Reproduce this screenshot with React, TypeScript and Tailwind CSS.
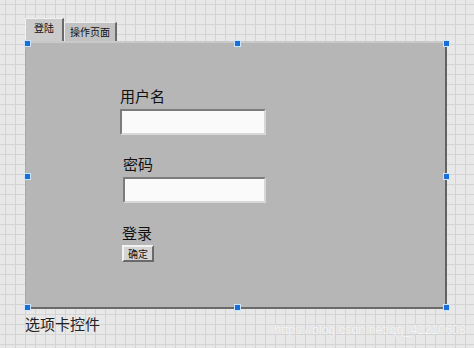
import React from "react";

const Handle = ({ className }: { className: string }) => (
  <div className={`absolute w-[7px] h-[7px] bg-[#1670d8] border border-[#cfe3fb] ${className}`} />
);

export default function App() {
  return (
    <div
      className="relative w-[474px] h-[348px] overflow-hidden bg-[#e8e8e8]"
      style={{
        fontFamily: '"Noto Sans CJK SC", "Noto Sans", sans-serif',
        backgroundImage:
          "linear-gradient(to right, #d4d4d4 1px, transparent 1px), linear-gradient(to bottom, #d4d4d4 1px, transparent 1px)",
        backgroundSize: "10px 10px",
        backgroundPosition: "5px 4px",
      }}
    >
      <div className="pt-[18px] pl-[25px]">
        {/* tabs */}
        <div className="flex items-end h-[23px]">
          <div className="w-[39px] h-[23px] bg-[#cbcbcb] border-t border-l border-[#f0f0f0] border-r-2 border-r-[#6a6a6a] flex items-start justify-center pt-[3px] text-[10px] leading-[12px] text-[#111]">
            登陆
          </div>
          <div className="w-[53px] h-[19px] bg-[#c2c2c2] border-t border-l border-[#eeeeee] border-r-2 border-r-[#6a6a6a] flex items-start justify-center pt-[3px] text-[10px] leading-[12px] text-[#111]">
            操作页面
          </div>
        </div>
        {/* panel */}
        <div className="relative w-[422px] h-[268px] bg-[#b6b6b6] border-t-2 border-t-[#c9c9c9] border-r-2 border-r-[#626262] border-b-2 border-b-[#6a6a6a] border-l border-l-[#a8a8a8]">
          <div className="pl-[94px] pt-[44px] flex flex-col">
            <div className="text-[15px] leading-[18px] text-[#111]">用户名</div>
            <div className="mt-[4px] w-[146px] h-[26px] bg-[#fafafa] border-2 border-t-[#7c7c7c] border-l-[#7c7c7c] border-r-[#d8d8d8] border-b-[#d8d8d8]" />
            <div className="mt-[20px] ml-[3px] text-[15px] leading-[18px] text-[#111]">密码</div>
            <div className="mt-[4px] ml-[3px] w-[143px] h-[26px] bg-[#fafafa] border-2 border-t-[#7c7c7c] border-l-[#7c7c7c] border-r-[#d8d8d8] border-b-[#d8d8d8]" />
            <div className="mt-[21px] ml-[2px] text-[15px] leading-[18px] text-[#111]">登录</div>
            <div className="mt-[3px] ml-[2px] w-[32px] h-[17px] bg-[#d4d4d4] border-2 border-t-[#f2f2f2] border-l-[#f2f2f2] border-r-[#6a6a6a] border-b-[#6a6a6a] flex items-center justify-center text-[10px] leading-[12px] text-[#111]">
              确定
            </div>
          </div>
          <Handle className="left-[-2px] top-[-3px]" />
          <Handle className="left-[208px] top-[-3px]" />
          <Handle className="right-[-5px] top-[-3px]" />
          <Handle className="left-[-2px] top-[130px]" />
          <Handle className="right-[-5px] top-[130px]" />
          <Handle className="left-[-2px] bottom-[-4px]" />
          <Handle className="left-[208px] bottom-[-4px]" />
          <Handle className="right-[-5px] bottom-[-4px]" />
        </div>
        <div className="mt-[6px] flex items-end justify-between pr-[8px]">
          <div className="text-[15px] leading-[18px] text-[#222]">选项卡控件</div>
          <div
            className="mb-[-5px] text-[12.5px] leading-[16px] text-[#f6f6f6] whitespace-nowrap"
            style={{ fontFamily: '"Liberation Sans", Arial, sans-serif', textShadow: "0 0 1px #c8c8c8" }}
          >
            https://blog.csdn.net/qq_42210608
          </div>
        </div>
      </div>
    </div>
  );
}
